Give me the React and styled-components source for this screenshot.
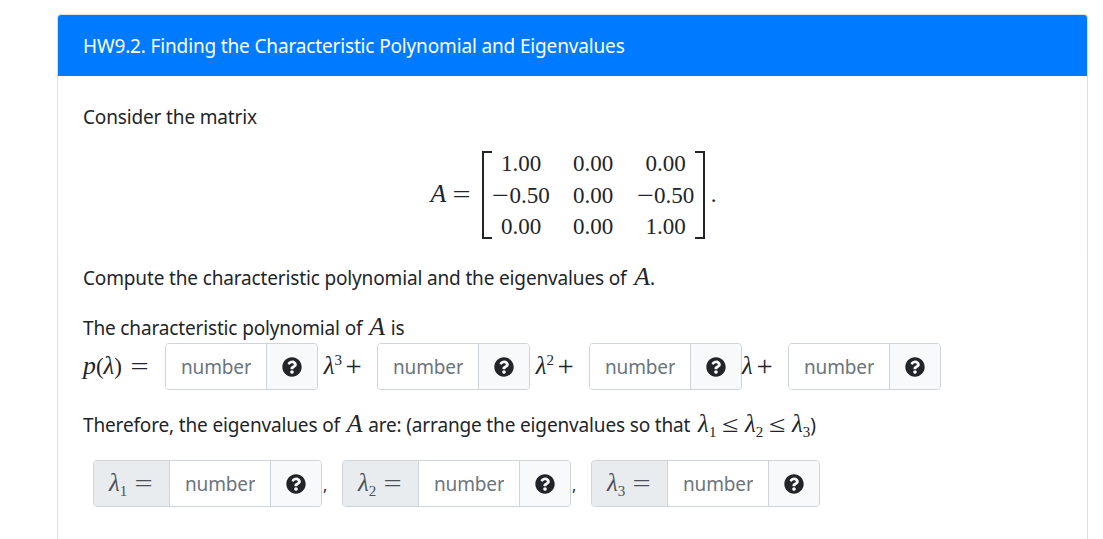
import React from "react";
import styled, { createGlobalStyle } from "styled-components";
import { FaQuestionCircle } from "react-icons/fa";

const Global = createGlobalStyle`
  html, body { margin: 0; height: 539px; overflow: hidden; background: #fff; }
  body { font-family: "Noto Sans", "Open Sans", sans-serif; font-size: 19px; line-height: 30px; color: #212529; }
  input::placeholder { color: #6c757d; opacity: 1; }
`;
const Page = styled.div`padding: 14px 15px 0 57px;`;
const Card = styled.section`
  border: 1px solid rgba(0,0,0,.125);
  border-bottom: 0;
  border-radius: 4px 4px 0 0;
  height: 525px;
  box-sizing: border-box;
  overflow: hidden;
`;
const Header = styled.h1`
  margin: 0;
  background: #007bff;
  color: #fff;
  height: 61px;
  padding: 0 25px;
  display: flex;
  align-items: center;
  font-size: 19px;
  font-weight: 400;
  letter-spacing: -0.15px;
`;
const Body = styled.div`padding: 26px 25px 0;`;
const Para = styled.p`
  margin: 0 0 ${p => p.$mb ?? 20}px;
  letter-spacing: -0.15px;
  white-space: nowrap;
`;
const MathText = styled.span`
  font-family: "Liberation Serif", serif;
  font-size: 23px;
  letter-spacing: 0;
  color: ${p => p.$muted ? "#495057" : "#212529"};
  margin-left: ${p => p.$l ?? 0}px;
  margin-right: ${p => p.$r ?? 0}px;
`;
const Var = styled.i`font-family: "Liberation Serif", serif; font-size: 1.12em; line-height: 0;`;
const Lambda = styled(Var)`font-size: 1.08em;`;
const Op = styled.span`
  display: inline-block;
  line-height: 1;
  transform: scale(${p => p.$x ?? 1.4}, ${p => p.$y ?? 1});
  margin: 0 ${p => p.$r ?? 4}px 0 ${p => p.$l ?? 4}px;
`;
const Sub = styled.sub`font-size: 15px; line-height: 0; font-style: normal; vertical-align: -5px;`;
const Sup = styled.sup`font-size: 15px; line-height: 0; font-style: normal; vertical-align: 9px;`;
const Display = styled.div`
  display: flex;
  justify-content: center;
  align-items: center;
  height: 92px;
  margin-bottom: 22px;
  padding-left: 2px;
  font-family: "Liberation Serif", serif;
  font-size: 23px;
`;
const Lhs = styled.span`margin-right: 13px;`;
const Bracket = styled.div`
  width: 8px;
  height: 84px;
  border: solid #212529;
  border-width: 2px 0;
  ${p => p.$right ? "border-right-width: 2px;" : "border-left-width: 2px;"}
`;
const Grid = styled.div`
  display: grid;
  grid-template-columns: 58px 40px 59px;
  column-gap: 23px;
  grid-auto-rows: 31.5px;
  align-items: center;
  justify-items: center;
  line-height: 31px;
`;
const Row = styled.div`
  display: flex;
  align-items: center;
  height: 47px;
  margin-bottom: ${p => p.$mb ?? 0}px;
  padding-left: ${p => p.$pl ?? 0}px;
`;
const Gap = styled.span`
  display: inline-block;
  width: ${p => p.$w}px;
  flex: none;
  white-space: nowrap;
`;
const Group = styled.div`
  display: flex;
  height: 47px;
  border: 1px solid #ced4da;
  border-radius: 4px;
  box-sizing: border-box;
  overflow: hidden;
  flex: none;
`;
const Label = styled.div`
  width: 76px;
  box-sizing: border-box;
  display: flex;
  align-items: center;
  justify-content: center;
  background: #e9ecef;
  border-right: 1px solid #ced4da;
  white-space: nowrap;
`;
const Field = styled.input`
  width: 100px;
  border: 0;
  outline: 0;
  padding: 0 15px;
  box-sizing: border-box;
  font: inherit;
  letter-spacing: -0.15px;
  color: #495057;
  background: #fff;
`;
const Help = styled.div`
  width: 51px;
  box-sizing: border-box;
  display: flex;
  align-items: center;
  justify-content: center;
  background: #f8f9fa;
  border-left: 1px solid #ced4da;
  color: #212529;
  font-size: 20px;
`;
const Comma = styled.span`
  width: 20px;
  flex: none;
  font-size: 16px;
  line-height: 16px;
  padding-top: 2px;
  padding-left: 1px;
  box-sizing: border-box;
`;

const Plus = () => <Op $x={1.25} $y={1.25} $l={5} $r={0}>+</Op>;
const Leq = () => <Op $x={1.3} $l={8} $r={8}>≤</Op>;

const Num = ({ label }) => (
  <Group>
    {label && <Label><MathText $muted><Lambda>λ</Lambda><Sub>{label}</Sub><Op $l={10} $r={4}>=</Op></MathText></Label>}
    <Field placeholder="number" aria-label="number" />
    <Help><FaQuestionCircle /></Help>
  </Group>
);

const cells = ["1.00", "0.00", "0.00", "-0.50", "0.00", "-0.50", "0.00", "0.00", "1.00"];

export default function App() {
  return (
    <Page>
      <Global />
      <Card>
        <Header>HW9.2. Finding the Characteristic Polynomial and Eigenvalues</Header>
        <Body>
          <Para $mb={17}>Consider the matrix</Para>
          <Display>
            <Lhs><Var>A</Var><Op $l={9} $r={1}>=</Op></Lhs>
            <Bracket />
            <Grid>
              {cells.map((c, i) => (
                <span key={i}>
                  {c[0] === "-" ? <><Op $x={1.3} $l={2} $r={2}>−</Op>{c.slice(1)}</> : c}
                </span>
              ))}
            </Grid>
            <Bracket $right />
            <span>&nbsp;.</span>
          </Display>
          <Para>Compute the characteristic polynomial and the eigenvalues of <MathText $l={3}><Var>A</Var></MathText>.</Para>
          <Para $mb={0}>The characteristic polynomial of <MathText $l={2} $r={1}><Var>A</Var></MathText> is</Para>
          <Row $mb={20}>
            <Gap $w={82}><MathText><Var>p</Var>(<Lambda>λ</Lambda>)<Op $l={11} $r={0}>=</Op></MathText></Gap>
            <Num />
            <Gap $w={59}><MathText>&nbsp;<Lambda>λ</Lambda><Sup>3</Sup><Plus /></MathText></Gap>
            <Num />
            <Gap $w={59}><MathText>&nbsp;<Lambda>λ</Lambda><Sup>2</Sup><Plus /></MathText></Gap>
            <Num />
            <Gap $w={46}><MathText><Lambda>λ</Lambda><Plus /></MathText></Gap>
            <Num />
          </Row>
          <Para $mb={20}>Therefore, the eigenvalues of <MathText $l={2} $r={1}><Var>A</Var></MathText> are: (arrange the eigenvalues so that <MathText $l={3}><Lambda>λ</Lambda><Sub>1</Sub><Leq /><Lambda>λ</Lambda><Sub>2</Sub><Leq /><Lambda>λ</Lambda><Sub>3</Sub></MathText>)</Para>
          <Row $pl={10}>
            <Num label="1" /><Comma>,</Comma>
            <Num label="2" /><Comma>,</Comma>
            <Num label="3" />
          </Row>
        </Body>
      </Card>
    </Page>
  );
}
